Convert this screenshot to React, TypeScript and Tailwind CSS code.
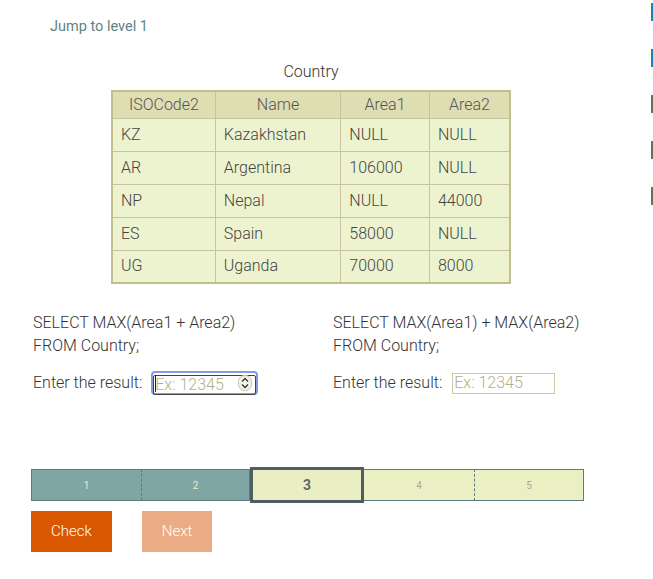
import React from 'react'

const rows = [
  ['KZ', 'Kazakhstan', 'NULL', 'NULL'],
  ['AR', 'Argentina', '106000', 'NULL'],
  ['NP', 'Nepal', 'NULL', '44000'],
  ['ES', 'Spain', '58000', 'NULL'],
  ['UG', 'Uganda', '70000', '8000'],
]

const font = { fontFamily: 'Roboto, "Liberation Sans", sans-serif' }

function Spinner() {
  return (
    <svg width="14" height="16" viewBox="0 0 14 16" className="absolute right-[4px] top-[2px]">
      <rect x="0.5" y="0.5" width="13" height="15" rx="6" fill="#f3f3e4" stroke="#c9c7a4" />
      <path d="M4 6.5 L7 3.5 L10 6.5" fill="none" stroke="#333" strokeWidth="1.3" />
      <path d="M4 9.5 L7 12.5 L10 9.5" fill="none" stroke="#333" strokeWidth="1.3" />
    </svg>
  )
}

export default function App() {
  return (
    <div className="relative h-[579px] w-[653px] overflow-hidden bg-white text-[#444]" style={font}>
      <div className="pl-[50px] pt-[18px] text-[14.5px] leading-[18px] text-[#5e8383]">Jump to level 1</div>

      <div className="ml-[111px] mt-[27px] w-[400px]">
        <div className="text-center text-[16px] font-light leading-[18px] text-[#333]">Country</div>
        <table className="mt-[9px] w-[400px] border-collapse border-2 border-[#c2be8e] text-[16px] font-light">
          <colgroup>
            <col className="w-[104px]" />
            <col className="w-[126px]" />
            <col className="w-[89px]" />
            <col className="w-[81px]" />
          </colgroup>
          <thead>
            <tr className="h-[27px] bg-[#dfddb2]">
              {['ISOCode2', 'Name', 'Area1', 'Area2'].map((h) => (
                <th key={h} className="border border-[#c6c39e] p-0 text-center font-light text-[#555]">
                  {h}
                </th>
              ))}
            </tr>
          </thead>
          <tbody>
            {rows.map((r) => (
              <tr key={r[0]} className="h-[33px] bg-[#eef3cf]">
                {r.map((c, i) => (
                  <td key={i} className="border border-[#c6c39e] px-[8px] py-0 text-[#444]">
                    {c}
                  </td>
                ))}
              </tr>
            ))}
          </tbody>
        </table>
      </div>

      <div className="ml-[33px] mt-[27px] grid w-[600px] grid-cols-2 text-[16px] font-light text-[#333]">
        <div>
          <div className="leading-[23px]">
            SELECT MAX(Area1 + Area2)
            <br />
            FROM Country;
          </div>
          <div className="mt-[14px] flex h-[24px] items-center gap-[9px]">
            <span>Enter the result:</span>
            <div className="relative h-[24px] w-[107px] rounded-[4px] border-2 border-[#8799df] bg-white">
              <div className="absolute left-[2px] top-[2px] h-[17px] w-[1px] bg-[#222]" />
              <input
                className="h-full w-full rounded-[2px] border border-[#444] bg-transparent px-[1px] text-[16px] font-light outline-none placeholder:text-[#b3b08a]"
                placeholder="Ex: 12345"
                style={font}
              />
              <Spinner />
            </div>
          </div>
        </div>
        <div>
          <div className="leading-[23px]">
            SELECT MAX(Area1) + MAX(Area2)
            <br />
            FROM Country;
          </div>
          <div className="mt-[14px] flex h-[24px] items-center gap-[10px]">
            <span>Enter the result:</span>
            <input
              className="h-[21px] w-[103px] border border-[#cbc9a0] bg-white px-[1px] text-[16px] font-light outline-none placeholder:text-[#b3b08a]"
              placeholder="Ex: 12345"
              style={font}
            />
          </div>
        </div>
      </div>

      <div className="ml-[31px] mt-[74px] flex h-[32px] w-[553px] items-stretch">
        <div className="flex w-[110px] items-center justify-center border border-r-0 border-[#5c7b7b] bg-[#7fa6a4] text-[10px] text-[#e9edc2]">1</div>
        <div className="flex w-[109px] items-center justify-center border border-[#5c7b7b] bg-[#7fa6a4] text-[10px] text-[#e9edc2] [border-left-style:dashed] [border-right-style:solid] [border-top-style:solid] [border-bottom-style:solid]">2</div>
        <div className="-my-[2px] flex w-[114px] items-center justify-center border-[3px] border-[#4f5e62] bg-[#eaeec3] text-[14px] font-bold text-[#666]">3</div>
        <div className="flex w-[110px] items-center justify-center border-y border-[#5c7b7b] bg-[#ebefc4] text-[10px] text-[#a9a98e]">4</div>
        <div className="flex w-[110px] items-center justify-center border border-[#5c7b7b] bg-[#ebefc4] text-[10px] text-[#a9a98e] [border-left-style:dashed] [border-right-style:solid] [border-top-style:solid] [border-bottom-style:solid]">5</div>
      </div>

      <div className="ml-[31px] mt-[10px] flex gap-[30px]">
        <button className="h-[41px] w-[81px] bg-[#d95700] text-[15px] font-light text-white" style={font}>Check</button>
        <button className="h-[41px] w-[70px] bg-[#ebab84] text-[15px] font-light text-white" style={font}>Next</button>
      </div>

      <div className="absolute right-0 top-[3px] h-[18px] w-[2px] bg-[#0f86b3]" />
      <div className="absolute right-0 top-[49px] h-[18px] w-[2px] bg-[#0f86b3]" />
      <div className="absolute right-0 top-[95px] h-[18px] w-[2px] bg-[#6e6e55]" />
      <div className="absolute right-0 top-[141px] h-[18px] w-[2px] bg-[#6e6e55]" />
      <div className="absolute right-0 top-[187px] h-[18px] w-[2px] bg-[#6e6e55]" />
    </div>
  )
}
